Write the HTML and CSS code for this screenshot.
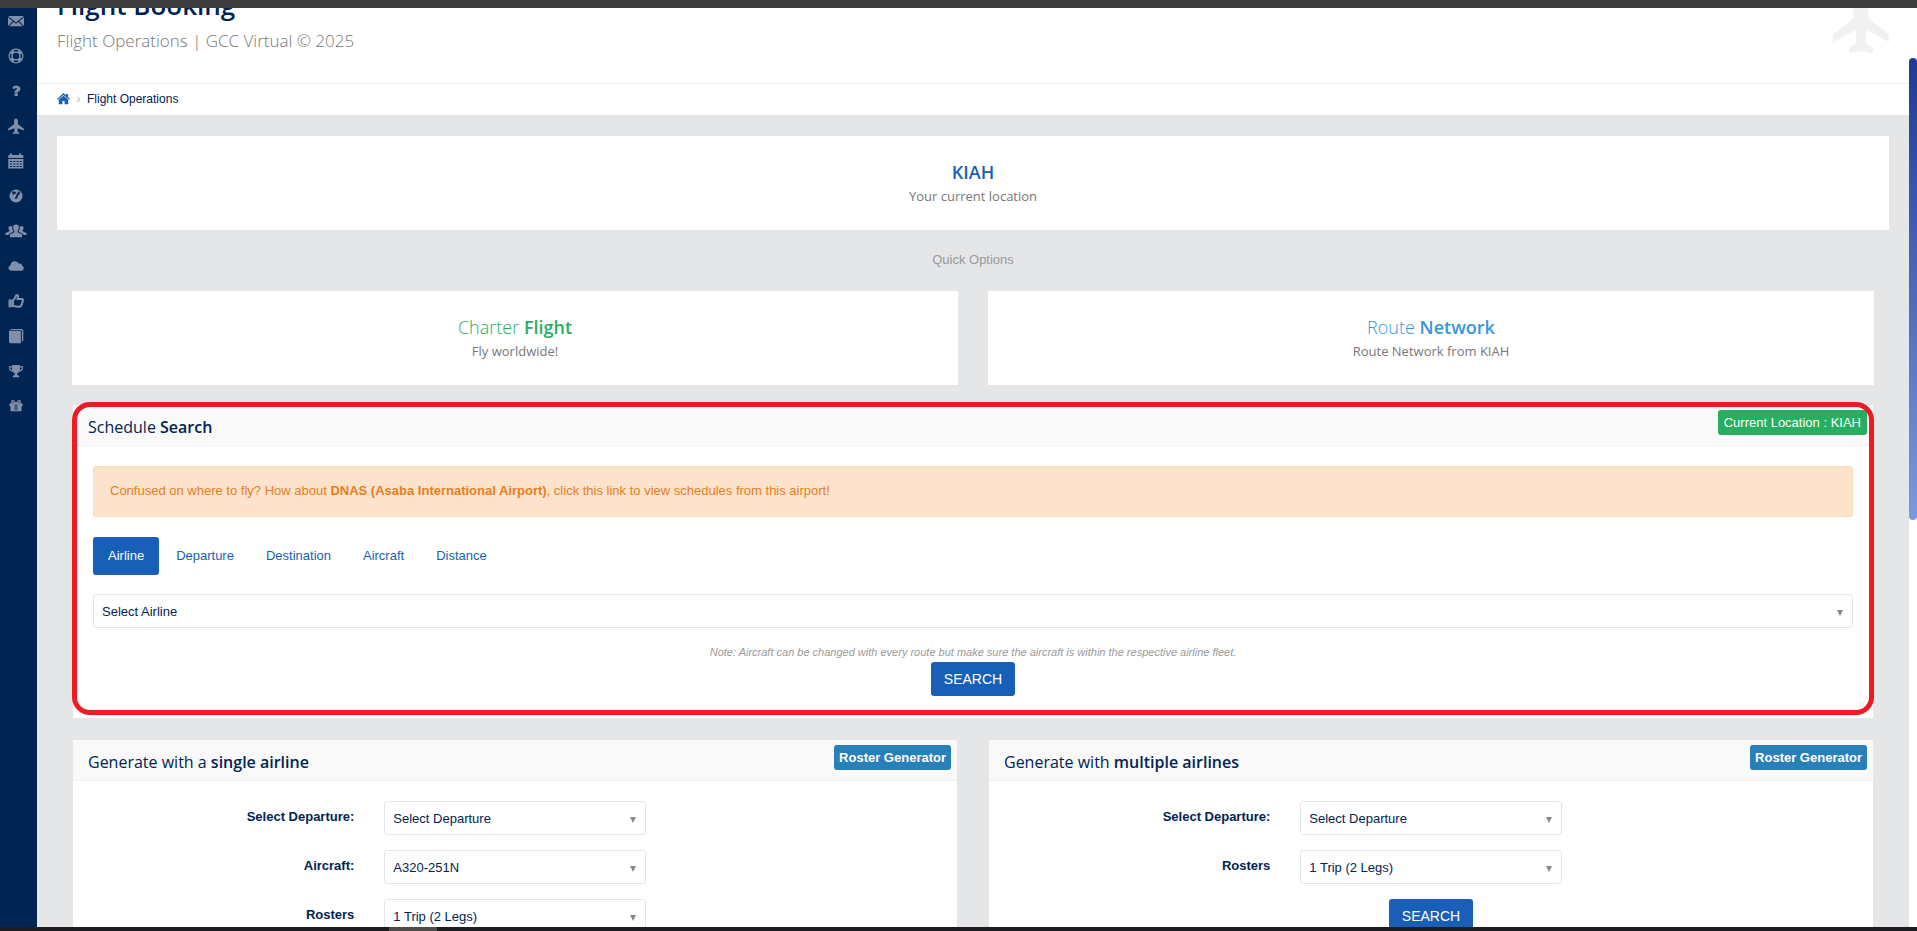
FILE: index.html
```html
<!doctype html>
<html lang="en">

<head>
  <meta charset="utf-8">
  <meta name="viewport" content="width=device-width, initial-scale=1">
  <link rel="stylesheet" href="styles.css">
  <title>Flight Booking</title>
</head>

<body>
  <div class="topbar"></div>
  <div class="app">
    <nav class="sidebar" aria-label="Main">
      <a href="#" aria-label="Messages">
        <svg viewBox="0 0 24 24"><path d="M4 7h16l-8 6.500zM4 8.300l4.800 3.900L4 17zM20 8.300V17l-4.800-4.800zM9.700 12.900L12 14.800l2.300-1.900L19 17.300H5z" /></svg>
      </a>
      <a href="#" aria-label="Support">
        <svg viewBox="0 0 24 24"><path fill-rule="evenodd" d="M12 4.500a7.500 7.500 0 1 1 0 15a7.500 7.500 0 0 1 0-15zM12 8.800a3.200 3.200 0 1 0 0 6.400a3.200 3.200 0 0 0 0-6.400z" /><path class="cut" d="M9.600 6.300a6.200 6.200 0 0 1 4.800 0l-.6 1.400a4.700 4.700 0 0 0-3.600 0zM9.600 17.700a6.200 6.200 0 0 0 4.800 0l-.6-1.400a4.700 4.700 0 0 1-3.600 0zM6.300 9.600a6.200 6.200 0 0 0 0 4.800l1.400-.6a4.700 4.700 0 0 1 0-3.600zM17.700 9.600a6.200 6.200 0 0 1 0 4.800l-1.400-.6a4.700 4.700 0 0 0 0-3.600z" /></svg>
      </a>
      <a href="#" aria-label="Help">
        <svg viewBox="0 0 24 24"><path d="M8.300 9.200C8.700 7.300 10.200 6.500 12.200 6.500c2.400 0 4.200 1.300 4.200 3.300 0 1.500-.9 2.200-1.700 2.700-.6.400-.9.600-.9 1.200H10.600c0-1.600.6-2.300 1.500-2.900.6-.4.900-.6.900-1.100s-.4-.8-1-.8-1.100.4-1.300 1.200zM10.600 14.300h3.200v2.700h-3.200z" /></svg>
      </a>
      <a href="#" aria-label="Flights">
        <svg viewBox="0 0 24 24"><path d="M12 4.500c1.300 0 1.900 1.200 1.900 2.600v3.100l6 4.500v1.700l-6.200-2.200-.3 3.400 2 1.500v1L12 19.400l-3.400.7v-1l2-1.500-.3-3.400-6.200 2.200v-1.700l6-4.500V7.100c0-1.400.6-2.600 1.900-2.600z" /></svg>
      </a>
      <a href="#" aria-label="Events">
        <svg viewBox="0 0 24 24"><path fill-rule="evenodd" d="M6 4.500h2V6h7V4.500h2V6h2.300v3H4.300V6H6zM4.300 10h15v9.500h-15zM6 12v1h2v-1zm3.300 0v1h2v-1zm3.300 0v1h2v-1zm3.200 0v1h2v-1zM6 14.500v1h2v-1zm3.300 0v1h2v-1zm3.300 0v1h2v-1zm3.200 0v1h2v-1zM6 17v1h2v-1zm3.300 0v1h2v-1zm3.300 0v1h2v-1zm3.200 0v1h2v-1z" /></svg>
      </a>
      <a href="#" aria-label="World">
        <svg viewBox="0 0 24 24"><circle cx="12" cy="12" r="6.500" /><path class="cut" d="M8.300 7.700l1.400-.8.900.8 1.600.2-.5 1.500-1.700.5-.5 1.200-1.200-1zM14 7.200l1.700.7.3 1.600-1.700 2-1.100 2.700-1.800.7-.5-1.300 1.600-1.500-.4-1.400 1.700-1.600z" /></svg>
      </a>
      <a href="#" aria-label="Pilots">
        <svg viewBox="0 0 24 24"><path d="M12 5.500c1.900 0 2.900 1.300 2.900 3.100 0 1.600-.6 2.700-1.300 3.400v1.300l3.800 1.800c.5.300.7.700.7 1.300v1.900H5.900v-1.900c0-.6.200-1 .7-1.300l3.800-1.800V12c-.7-.7-1.300-1.800-1.300-3.400 0-1.800 1-3.100 2.900-3.100zM6.800 7c.6 0 1.100.2 1.500.6-.3 1.800.1 3.500 1 4.700v.5l-3.800 1.900c-.5.300-.8.700-.9 1.300H1.500v-1.200c0-.5.200-.8.600-1l3.300-1.600v-.9c-.6-.5-1-1.300-1-2.300C4.400 7.700 5.300 7 6.800 7zM17.200 7c-.6 0-1.100.2-1.500.6.3 1.800-.1 3.500-1 4.700v.5l3.800 1.900c.5.300.8.700.9 1.300h3.100v-1.200c0-.5-.2-.8-.6-1l-3.300-1.600v-.9c.6-.5 1-1.300 1-2.300 0-1.300-.9-2-2.400-2z" /></svg>
      </a>
      <a href="#" aria-label="Weather">
        <svg viewBox="0 0 24 24"><path d="M7.500 16.800C5.700 16.800 4.500 15.500 4.500 14c0-1.300.8-2.300 2-2.700.2-2.400 2-4 4.300-4 1.900 0 3.300 1 3.900 2.500 1.800-.8 3.600.3 3.500 2.200 1 .4 1.500 1.200 1.500 2.200 0 1.500-1.100 2.600-2.700 2.600z" /></svg>
      </a>
      <a href="#" aria-label="Likes">
        <svg viewBox="0 0 24 24"><path d="M4.500 10.500h3.300v7.800H4.500z" /><path class="line" d="M9 11.200c1.700-.5 2.700-3.900 3.300-5.100.9-.5 2 .2 1.800 1.600l-.6 2.300h4.200c1.300 0 1.700 1.200.9 2 .3.800.1 1.400-.5 1.900.2.800-.1 1.500-.8 1.900 0 1.200-.6 1.900-1.900 1.900h-2.200c-1.600 0-2.700-.8-4.200-.8z" /></svg>
      </a>
      <a href="#" aria-label="Documents">
        <svg viewBox="0 0 24 24"><path d="M7 5h11l1.300 1.300v10.500L17.900 18V6.700l-.8-.7H6zM5 6.800h11.900v12.400H6.200L5 18z" /></svg>
      </a>
      <a href="#" aria-label="Awards">
        <svg viewBox="0 0 24 24"><path fill-rule="evenodd" d="M8 6h8v1.300h3v1.900c0 2-1.700 3.200-3.700 3.500-.6.900-1.300 1.500-2.200 1.700v1.700l2.200.6v1.500H8.700v-1.500l2.200-.6v-1.700c-.9-.2-1.600-.8-2.200-1.700C6.700 12.400 5 11.200 5 9.200V7.300h3zm-1.800 2.400v.8c0 1 .8 1.800 1.900 2.100-.2-.9-.2-1.900-.1-2.900zm9.800 0c.1 1 .1 2-.1 2.900 1.100-.3 1.900-1.100 1.900-2.100v-.8z" /></svg>
      </a>
      <a href="#" aria-label="Shop">
        <svg viewBox="0 0 24 24"><path fill-rule="evenodd" d="M5.500 9.300h4C7.500 9.300 6.800 8.300 7 7.300c.3-1.400 2.600-2 4-.1l1 1.500 1-1.500c1.400-1.900 3.700-1.300 4 .1.200 1-.5 2-2.500 2h4v3h-1v5h-11v-5h-1zm5.200 1v6h.8v-6zm1.800 0v6h.8v-6zM9.500 7.300c-.6-.4-1.300-.2-1.300.3s.7.900 2.300.9zm5 0l-1 1.200c1.600 0 2.300-.4 2.300-.9s-.7-.7-1.300-.3z" /></svg>
      </a>
    </nav>

    <main class="main">
      <header class="page-header">
        <div class="page-heading">
          <h1>Flight Booking</h1>
          <p>Flight Operations | GCC Virtual © 2025</p>
        </div>
        <svg class="header-plane" viewBox="0 0 56 56"><path d="M20.500 0h15v21.500L55.500 37q.5 1 .5 2.500V45L33 33v13l7 5.500v5L28 54l-12 2.500v-5l7-5.500V33L0 45v-5.500Q0 38 .5 37l20-15.500z" /></svg>
      </header>
      <nav class="breadcrumb" aria-label="Breadcrumb">
        <a href="#" aria-label="Home">
          <svg viewBox="0 0 13 12"><path d="M6.500 0L9 2.300V1h2v3.100L13 6l-.7.800-5.800-4.700L.7 6.800 0 6zM6.500 2.700L11.200 6.600v4.600H7.600V8H5.400v3.200H1.800V6.600z" /></svg>
        </a>
        <span class="separator">›</span>
        <span>Flight Operations</span>
      </nav>

      <div class="content">
        <section class="tile">
          <h2 class="blue"><b>KIAH</b></h2>
          <p>Your current location</p>
        </section>

        <p class="quick-title">Quick Options</p>

        <div class="inner">
          <div class="columns">
            <a class="tile" href="#">
              <h2 class="green">Charter <b>Flight</b></h2>
              <p>Fly worldwide!</p>
            </a>
            <a class="tile" href="#">
              <h2 class="sky">Route <b>Network</b></h2>
              <p>Route Network from KIAH</p>
            </a>
          </div>

          <section class="panel search-panel">
            <div class="panel-header">
              <h3>Schedule <b>Search</b></h3>
              <span class="badge badge-green">Current Location : KIAH</span>
            </div>
            <div class="panel-body">
              <a class="alert" href="#">Confused on where to fly? How about <b>DNAS (Asaba International Airport)</b>, click this link to view schedules from this airport!</a>
              <div class="tabs" role="tablist">
                <button class="active" type="button" role="tab" aria-selected="true">Airline</button>
                <button type="button" role="tab">Departure</button>
                <button type="button" role="tab">Destination</button>
                <button type="button" role="tab">Aircraft</button>
                <button type="button" role="tab">Distance</button>
              </div>
              <form>
                <div class="select">
                  <select aria-label="Airline">
                    <option>Select Airline</option>
                  </select>
                </div>
                <p class="note">Note: Aircraft can be changed with every route but make sure the aircraft is within the respective airline fleet.</p>
                <button class="btn" type="button">SEARCH</button>
              </form>
            </div>
          </section>

          <div class="columns rosters">
            <section class="panel">
              <div class="panel-header">
                <h3>Generate with a <b>single airline</b></h3>
                <span class="badge badge-blue">Roster Generator</span>
              </div>
              <form class="panel-body">
                <div class="form-row">
                  <label for="single-departure">Select Departure:</label>
                  <div class="select">
                    <select id="single-departure">
                      <option>Select Departure</option>
                    </select>
                  </div>
                </div>
                <div class="form-row">
                  <label for="single-aircraft">Aircraft:</label>
                  <div class="select">
                    <select id="single-aircraft">
                      <option>A320-251N</option>
                    </select>
                  </div>
                </div>
                <div class="form-row">
                  <label for="single-rosters">Rosters</label>
                  <div class="select">
                    <select id="single-rosters">
                      <option>1 Trip (2 Legs)</option>
                    </select>
                  </div>
                </div>
              </form>
            </section>

            <section class="panel">
              <div class="panel-header">
                <h3>Generate with <b>multiple airlines</b></h3>
                <span class="badge badge-blue">Roster Generator</span>
              </div>
              <form class="panel-body">
                <div class="form-row">
                  <label for="multi-departure">Select Departure:</label>
                  <div class="select">
                    <select id="multi-departure">
                      <option>Select Departure</option>
                    </select>
                  </div>
                </div>
                <div class="form-row">
                  <label for="multi-rosters">Rosters</label>
                  <div class="select">
                    <select id="multi-rosters">
                      <option>1 Trip (2 Legs)</option>
                    </select>
                  </div>
                </div>
                <button class="btn" type="button">SEARCH</button>
              </form>
            </section>
          </div>
        </div>
      </div>
    </main>

    <div class="scrollbar">
      <div class="scrollbar-thumb"></div>
    </div>
  </div>
  <div class="bottombar">
    <div class="bottombar-item"></div>
  </div>
</body>

</html>
```

FILE: styles.css
```css
* {
  box-sizing: border-box;
}

body {
  display: flex;
  flex-direction: column;
  height: 100vh;
  margin: 0;
  overflow: hidden;
  background-color: #fff;
  color: #002452;
  font-family: "Liberation Sans", Arial, sans-serif;
  font-size: 13px;
  line-height: 20px;
}

h1,
h2,
h3,
p {
  margin: 0;
}

h1,
h2,
h3,
.tile,
.page-header {
  font-family: "Open Sans", sans-serif;
}

a {
  color: #185fb8;
  text-decoration: none;
}

.topbar {
  flex: none;
  height: 8px;
  background-color: #3c3c3c;
}

.bottombar {
  flex: none;
  height: 4px;
  padding-left: 389px;
  background-color: #1d1c1e;
}

.bottombar-item {
  width: 48px;
  height: 4px;
  background-color: #4f4b4b;
}

.app {
  display: flex;
  flex: 1;
  min-height: 0;
}

/* sidebar */
.sidebar {
  flex: none;
  width: 37px;
  overflow: hidden;
  background-color: #002452;
}

.sidebar a {
  display: flex;
  align-items: center;
  height: 35px;
  padding-left: 4px;
}

.sidebar a:first-child {
  height: 30px;
  padding-bottom: 5px;
}

.sidebar svg {
  flex: none;
  width: 24px;
  height: 24px;
  fill: #8090aa;
}

.sidebar .cut {
  fill: #002452;
}

.sidebar .line {
  fill: none;
  stroke: #8090aa;
  stroke-width: 2;
}

/* scrollbar */
.scrollbar {
  flex: none;
  width: 8px;
  padding-top: 50px;
  background-color: #fff;
}

.scrollbar-thumb {
  height: 462px;
  border-radius: 4px;
  background: linear-gradient(#1e3a93, #7b9ae0);
}

/* page header */
.main {
  flex: 1;
  min-width: 0;
  overflow: hidden;
  background-color: #e5e6e8;
}

.page-header {
  display: flex;
  justify-content: space-between;
  align-items: flex-end;
  height: 76px;
  padding: 0 20px 30px;
  overflow: hidden;
  border-bottom: 1px solid #eee;
  background-color: #fff;
}

.page-heading h1 {
  font-size: 26px;
  font-weight: 600;
  line-height: 34px;
}

.page-heading p {
  padding-top: 7px;
  color: #777;
  font-size: 17px;
  font-weight: 300;
  line-height: 24px;
}

.header-plane {
  width: 56px;
  height: 56px;
  fill: #f1f1f1;
}

.breadcrumb {
  display: flex;
  align-items: center;
  height: 31px;
  padding: 0 20px 2px;
  background-color: #fff;
  font-size: 12px;
}

.breadcrumb svg {
  display: block;
  width: 13px;
  height: 12px;
  fill: #185fb8;
}

.separator {
  width: 17px;
  color: #bbb;
  text-align: center;
}

.content {
  padding: 21px 20px 0;
}

.inner {
  padding: 0 15px;
}

.columns {
  display: grid;
  grid-template-columns: 1fr 1fr;
  gap: 30px;
}

/* tiles */
.tile {
  display: block;
  height: 94px;
  padding-top: 23px;
  background-color: #fff;
  color: #777;
  text-align: center;
}

.tile h2 {
  font-size: 18px;
  font-weight: 300;
  line-height: 27px;
}

.tile b,
.panel h3 b {
  font-weight: 600;
}

.tile .blue {
  color: #185fb8;
}

.tile .green {
  color: #27ae60;
}

.tile .sky {
  color: #3498db;
}

.quick-title {
  padding: 20px 0 21px;
  color: #999;
  text-align: center;
}

/* panels */
.panel {
  border: 1px solid transparent;
  background-color: #fff;
  background-clip: padding-box;
}

.panel-header {
  display: flex;
  justify-content: space-between;
  align-items: flex-start;
  height: 41px;
  padding: 5px 6px 0 15px;
  border-bottom: 1px solid #f0f0f0;
  background-color: #f9f9f9;
}

.panel h3 {
  padding-top: 6px;
  font-size: 16px;
  font-weight: 400;
  line-height: 22px;
}

.panel-body {
  padding: 20px;
}

.badge {
  border-radius: 3px;
  color: #fff;
  line-height: 25px;
}

.badge-green {
  padding: 0 6px;
  background-color: #27ae60;
}

.badge-blue {
  padding: 0 5px;
  background-color: #2980b9;
  font-weight: 700;
}

.search-panel {
  position: relative;
  margin-top: 19px;
  padding-bottom: 2px;
}

/* red outline drawn around the search panel */
.search-panel::after {
  content: "";
  position: absolute;
  inset: -3px -1px 3px;
  border: 5px solid #ed1c24;
  border-radius: 18px;
  pointer-events: none;
}

.alert {
  display: block;
  padding: 14px 16px 15px;
  border: 1px solid #fdd9b5;
  border-radius: 3px;
  background-color: #fde3cb;
  color: #e67e22;
}

.tabs {
  display: flex;
  gap: 2px;
  margin: 20px 0 19px;
}

.tabs button {
  padding: 9px 15px;
  border: 0;
  border-radius: 3px;
  background: none;
  color: #185fb8;
  font: inherit;
}

.tabs .active {
  background-color: #185fb8;
  color: #fff;
}

.select {
  position: relative;
}

.select::after {
  content: "";
  position: absolute;
  top: 16px;
  right: 10px;
  border: 3px solid transparent;
  border-top: 6px solid #888;
  border-bottom: 0;
  pointer-events: none;
}

select {
  display: block;
  width: 100%;
  height: 34px;
  padding: 2px 8px 0;
  appearance: none;
  border: 1px solid #e5e6e8;
  border-radius: 3px;
  background-color: #fff;
  color: #002452;
  font: inherit;
}

.note {
  padding-top: 14px;
  color: #999;
  font-size: 11px;
  font-style: italic;
  text-align: center;
}

.btn {
  display: block;
  height: 34px;
  margin: 0 auto;
  padding: 0 13px;
  border: 0;
  border-radius: 3px;
  background-color: #185fb8;
  color: #fff;
  font-family: inherit;
  font-size: 14px;
}

/* roster forms */
.rosters {
  margin-top: 20px;
}

.rosters .panel {
  min-height: 240px;
}

.form-row {
  display: grid;
  grid-template-columns: repeat(3, 1fr);
  gap: 30px;
  margin-bottom: 15px;
}

.form-row label {
  padding-top: 6px;
  font-weight: 700;
  text-align: right;
}
```
